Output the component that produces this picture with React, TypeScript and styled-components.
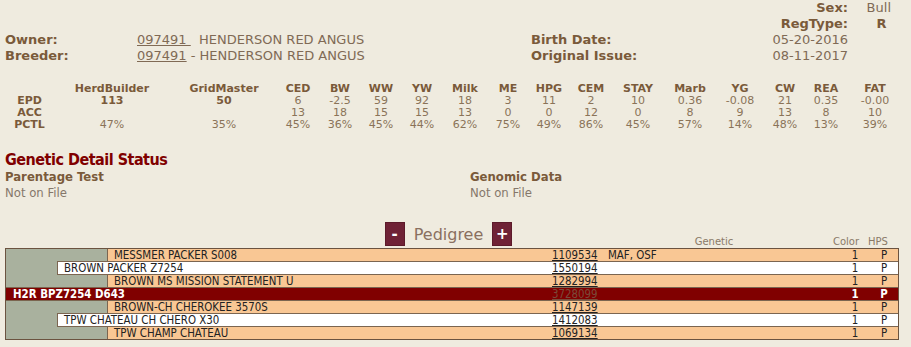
import React from 'react';
import styled, { createGlobalStyle } from 'styled-components';

const Global = createGlobalStyle`
  html, body { margin: 0; padding: 0; background: #EFEBDF; }
  body { font-family: "DejaVu Sans", Verdana, sans-serif; }
`;

const Page = styled.div`
  width: 911px;
  height: 347px;
  overflow: hidden;
  box-sizing: border-box;
  padding: 0 12px 0 5px;
`;

const Header = styled.div`
  display: grid;
  grid-template-columns: 132px 394px 217px 100px 43px;
  grid-auto-rows: 16px;
  font-size: 13px;
  line-height: 16px;
  color: #806a55;
  white-space: pre;
`;

const Label = styled.div<{ $right?: boolean }>`
  font-weight: bold;
  color: #7a5a3a;
  text-align: ${(p) => (p.$right ? 'right' : 'left')};
`;

const Value = styled.div<{ $right?: boolean; $bold?: boolean }>`
  text-align: ${(p) => (p.$right ? 'right' : 'left')};
  font-weight: ${(p) => (p.$bold ? 'bold' : 'normal')};
  color: ${(p) => (p.$bold ? '#7a5a3a' : '#806a55')};
`;

const Link = styled.span`
  text-decoration: underline;
`;

const EpdTable = styled.div`
  margin-top: 19px;
  display: grid;
  grid-template-columns: 49px 116px 108px 40px 44px 38px 44px 42px 44px 38px 46px 48px 56px 44px 46px 36px 62px;
  grid-auto-rows: 12px;
  font-size: 11px;
  line-height: 12px;
  color: #8a7358;
  text-align: center;
  white-space: nowrap;
`;

const EpdHead = styled.div`
  font-weight: bold;
  color: #7a5a3a;
`;

const EpdCell = styled.div<{ $bold?: boolean }>`
  font-weight: ${(p) => (p.$bold ? 'bold' : 'normal')};
  color: ${(p) => (p.$bold ? '#7a5a3a' : '#8a7358')};
`;

const Heading = styled.h2`
  margin: 19px 0 0;
  font-family: "DejaVu Sans Condensed", "DejaVu Sans", sans-serif;
  font-size: 16px;
  letter-spacing: -0.5px;
  line-height: 19px;
  font-weight: bold;
  color: #800000;
`;

const StatusGrid = styled.div`
  display: grid;
  grid-template-columns: 465px 1fr;
  font-family: "DejaVu Sans Condensed", "DejaVu Sans", sans-serif;
  font-size: 13px;
  line-height: 16px;
`;

const StatusTitle = styled.div`
  font-weight: bold;
  color: #7a5a3a;
`;

const StatusValue = styled.div`
  color: #85776a;
`;

const PedigreeBar = styled.div`
  margin-top: 21px;
  margin-bottom: 2px;
  display: grid;
  grid-template-columns: 1fr auto 1fr;
  align-items: end;
`;

const Controls = styled.div`
  display: flex;
  align-items: center;
  gap: 9px;
  margin-right: 7px;
`;

const ToggleButton = styled.button`
  width: 20px;
  height: 24px;
  padding: 0;
  border: 1px solid #5c1a2a;
  background: #6f2236;
  color: #fff;
  font-family: "DejaVu Sans", sans-serif;
  font-size: 15px;
  font-weight: bold;
  line-height: 20px;
  cursor: pointer;
`;

const PedigreeTitle = styled.span`
  font-size: 16px;
  color: #8a7060;
`;

const ColumnLabels = styled.div`
  justify-self: end;
  display: grid;
  grid-template-columns: 80px 74px 36px 28px 7px;
  font-size: 10px;
  line-height: 12px;
  color: #8a7a68;
  text-align: center;
  margin-bottom: -2px;
`;

const Pedigree = styled.div`
  border: 1px solid #6b5340;
  background: #a9b19e;
  font-family: "DejaVu Sans Condensed", "DejaVu Sans", sans-serif;
  font-size: 11.4px;
  color: #222;
`;

const PedRow = styled.div`
  display: flex;
`;

const Indent = styled.div<{ $gen: number }>`
  flex: 0 0 ${(p) => (p.$gen === 2 ? 101 : p.$gen === 1 ? 51 : 0)}px;
`;

type Tone = 'sire' | 'parent' | 'self';

const RowBody = styled.div<{ $tone: Tone }>`
  flex: 1;
  display: grid;
  grid-template-columns: 1fr 51px 237px 30px 28px;
  height: 12px;
  line-height: 12px;
  white-space: nowrap;
  background: ${(p) => (p.$tone === 'self' ? '#800000' : p.$tone === 'parent' ? '#ffffff' : '#f9c794')};
  color: ${(p) => (p.$tone === 'self' ? '#fff' : '#222')};
  font-weight: ${(p) => (p.$tone === 'self' ? 'bold' : 'normal')};
  border-left: ${(p) => (p.$tone === 'self' ? 'none' : '1px solid #7b6550')};
  border-top: ${(p) => (p.$tone === 'sire' ? 'none' : '1px solid #7b6550')};
  border-bottom: ${(p) => (p.$tone === 'sire' ? 'none' : '1px solid #7b6550')};
`;

const NameCell = styled.div<{ $self?: boolean }>`
  padding-left: ${(p) => (p.$self ? 7 : 6)}px;
  overflow: hidden;
`;

const RegCell = styled.div<{ $self?: boolean }>`
  text-decoration: underline;
  font-weight: normal;
  color: ${(p) => (p.$self ? '#7a4a3a' : '#222')};
`;

const GeneticCell = styled.div`
  padding-left: 5px;
  font-weight: normal;
`;

const CenterCell = styled.div`
  text-align: center;
`;

const epdHeads = ['', 'HerdBuilder', 'GridMaster', 'CED', 'BW', 'WW', 'YW', 'Milk', 'ME', 'HPG', 'CEM', 'STAY', 'Marb', 'YG', 'CW', 'REA', 'FAT'];
const epdRows: { label: string; values: string[]; boldIdx: number[] }[] = [
  { label: 'EPD', values: ['113', '50', '6', '-2.5', '59', '92', '18', '3', '11', '2', '10', '0.36', '-0.08', '21', '0.35', '-0.00'], boldIdx: [0, 1] },
  { label: 'ACC', values: ['', '', '13', '18', '15', '15', '13', '0', '0', '12', '0', '8', '9', '13', '8', '10'], boldIdx: [] },
  { label: 'PCTL', values: ['47%', '35%', '45%', '36%', '45%', '44%', '62%', '75%', '49%', '86%', '45%', '57%', '14%', '48%', '13%', '39%'], boldIdx: [] },
];

const pedigree: { gen: number; tone: Tone; name: string; reg: string; genetic: string }[] = [
  { gen: 2, tone: 'sire', name: 'MESSMER PACKER S008', reg: '1109534', genetic: 'MAF, OSF' },
  { gen: 1, tone: 'parent', name: 'BROWN PACKER Z7254', reg: '1550194', genetic: '' },
  { gen: 2, tone: 'sire', name: 'BROWN MS MISSION STATEMENT U', reg: '1282994', genetic: '' },
  { gen: 0, tone: 'self', name: 'H2R BPZ7254 D643', reg: '3728099', genetic: '' },
  { gen: 2, tone: 'sire', name: 'BROWN-CH CHEROKEE 3570S', reg: '1147139', genetic: '' },
  { gen: 1, tone: 'parent', name: 'TPW CHATEAU CH CHERO X30', reg: '1412083', genetic: '' },
  { gen: 2, tone: 'sire', name: 'TPW CHAMP CHATEAU', reg: '1069134', genetic: '' },
];

export default function App() {
  return (
    <Page>
      <Global />
      <Header>
        <div />
        <div />
        <div />
        <Label $right>Sex:</Label>
        <Value $right>Bull</Value>

        <div />
        <div />
        <div />
        <Label $right>RegType:</Label>
        <Value $right $bold>R </Value>

        <Label>Owner:</Label>
        <Value>
          <Link>097491 </Link>{'  '}HENDERSON RED ANGUS
        </Value>
        <Label>Birth Date:</Label>
        <Value $right>05-20-2016</Value>
        <div />

        <Label>Breeder:</Label>
        <Value>
          <Link>097491</Link> - HENDERSON RED ANGUS
        </Value>
        <Label>Original Issue:</Label>
        <Value $right>08-11-2017</Value>
        <div />
      </Header>

      <EpdTable>
        {epdHeads.map((h, i) => (
          <EpdHead key={`h${i}`}>{h}</EpdHead>
        ))}
        {epdRows.map((r) => (
          <React.Fragment key={r.label}>
            <EpdHead>{r.label}</EpdHead>
            {r.values.map((v, i) => (
              <EpdCell key={i} $bold={r.boldIdx.includes(i)}>
                {v}
              </EpdCell>
            ))}
          </React.Fragment>
        ))}
      </EpdTable>

      <Heading>Genetic Detail Status</Heading>
      <StatusGrid>
        <StatusTitle>Parentage Test</StatusTitle>
        <StatusTitle>Genomic Data</StatusTitle>
        <StatusValue>Not on File</StatusValue>
        <StatusValue>Not on File</StatusValue>
      </StatusGrid>

      <PedigreeBar>
        <div />
        <Controls>
          <ToggleButton>-</ToggleButton>
          <PedigreeTitle>Pedigree</PedigreeTitle>
          <ToggleButton>+</ToggleButton>
        </Controls>
        <ColumnLabels>
          <span>Genetic</span>
          <span />
          <span>Color</span>
          <span>HPS</span>
          <span />
        </ColumnLabels>
      </PedigreeBar>

      <Pedigree>
        {pedigree.map((p) => (
          <PedRow key={p.reg}>
            <Indent $gen={p.gen} />
            <RowBody $tone={p.tone}>
              <NameCell $self={p.tone === 'self'}>{p.name}</NameCell>
              <RegCell $self={p.tone === 'self'}>{p.reg}</RegCell>
              <GeneticCell>{p.genetic}</GeneticCell>
              <CenterCell>1</CenterCell>
              <CenterCell>P</CenterCell>
            </RowBody>
          </PedRow>
        ))}
      </Pedigree>
    </Page>
  );
}
